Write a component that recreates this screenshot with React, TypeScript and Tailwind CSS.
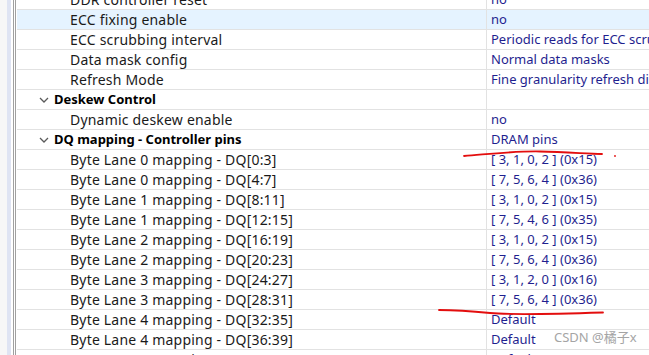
import React from 'react'

type Row = {
  label: string
  value?: string
  group?: boolean
  selected?: boolean
}

const rows: Row[] = [
  { label: 'DDR controller reset', value: 'no' },
  { label: 'ECC fixing enable', value: 'no', selected: true },
  { label: 'ECC scrubbing interval', value: 'Periodic reads for ECC scrubbing' },
  { label: 'Data mask config', value: 'Normal data masks' },
  { label: 'Refresh Mode', value: 'Fine granularity refresh disabled' },
  { label: 'Deskew Control', group: true },
  { label: 'Dynamic deskew enable', value: 'no' },
  { label: 'DQ mapping - Controller pins', value: 'DRAM pins', group: true },
  { label: 'Byte Lane 0 mapping - DQ[0:3]', value: '[ 3, 1, 0, 2 ] (0x15)' },
  { label: 'Byte Lane 0 mapping - DQ[4:7]', value: '[ 7, 5, 6, 4 ] (0x36)' },
  { label: 'Byte Lane 1 mapping - DQ[8:11]', value: '[ 3, 1, 0, 2 ] (0x15)' },
  { label: 'Byte Lane 1 mapping - DQ[12:15]', value: '[ 7, 5, 4, 6 ] (0x35)' },
  { label: 'Byte Lane 2 mapping - DQ[16:19]', value: '[ 3, 1, 0, 2 ] (0x15)' },
  { label: 'Byte Lane 2 mapping - DQ[20:23]', value: '[ 7, 5, 6, 4 ] (0x36)' },
  { label: 'Byte Lane 3 mapping - DQ[24:27]', value: '[ 3, 1, 2, 0 ] (0x16)' },
  { label: 'Byte Lane 3 mapping - DQ[28:31]', value: '[ 7, 5, 6, 4 ] (0x36)' },
  { label: 'Byte Lane 4 mapping - DQ[32:35]', value: 'Default' },
  { label: 'Byte Lane 4 mapping - DQ[36:39]', value: 'Default' },
  { label: 'Byte Lane 5 mapping - DQ[40:43]', value: 'Default' },
]

const Chevron = () => (
  <svg width="10" height="6" viewBox="0 0 10 6" className="shrink-0">
    <path d="M1 1 L5 5 L9 1" fill="none" stroke="#5a5a5a" strokeWidth="1.3" />
  </svg>
)

const PropRow = ({ row }: { row: Row }) => (
  <div
    className={
      'flex h-5 shrink-0 border-b border-[#e2e2e2] ' +
      (row.selected ? 'bg-[#e5f3ff]' : 'bg-white')
    }
  >
    <div className="w-[470px] shrink-0 flex items-center border-r border-[#e2e2e2] whitespace-nowrap">
      {row.group ? (
        <div className="flex items-center pl-[22px] gap-[5px] font-bold text-[13px] tracking-normal text-black">
          <Chevron />
          <span>{row.label}</span>
        </div>
      ) : (
        <span className="pl-[53px] text-[14px] tracking-[0.2px] text-[#1a1a1a]">{row.label}</span>
      )}
    </div>
    <div className="flex-1 flex items-center pl-[4px] text-[13px] tracking-normal text-[#1f1f8f] whitespace-nowrap overflow-hidden">
      {row.value}
    </div>
  </div>
)

export default function App() {
  return (
    <div
      className="relative w-[649px] h-[355px] overflow-hidden bg-white flex leading-none"
      style={{ fontFamily: '"Noto Sans", "Noto Sans CJK SC", sans-serif' }}
    >
      <div className="w-[7px] bg-[#f7f7f7] shrink-0" />
      <div className="w-[4px] bg-[#dfe4f3] shrink-0" />
      <div className="w-[2px] shrink-0" />
      <div className="w-px bg-[#a0a0a0] shrink-0" />
      <div className="w-px shrink-0" />
      <div className="w-px bg-[#a0a0a0] shrink-0" />
      <div className="w-px shrink-0" />
      <div className="flex-1 flex flex-col mt-[-10px] min-w-0">
        {rows.map((r, i) => (
          <PropRow key={i} row={r} />
        ))}
      </div>

      <svg className="absolute inset-0 pointer-events-none" width="649" height="355">
        <path
          d="M464 156 C 490 154, 515 151, 540 151.5 S 585 153.5, 602 154"
          fill="none"
          stroke="#e30e0e"
          strokeWidth="1.8"
          strokeLinecap="round"
        />
        <circle cx="615" cy="156" r="0.9" fill="#e30e0e" />
        <path
          d="M439 310 C 460 310, 470 311, 490 313 S 540 314.5, 603 312.5"
          fill="none"
          stroke="#e30e0e"
          strokeWidth="1.8"
          strokeLinecap="round"
        />
      </svg>

      <div className="absolute left-[554px] top-[331px] text-[13px] text-[#9b9b9b] opacity-90 whitespace-nowrap">
        CSDN @橘子x
      </div>
    </div>
  )
}
